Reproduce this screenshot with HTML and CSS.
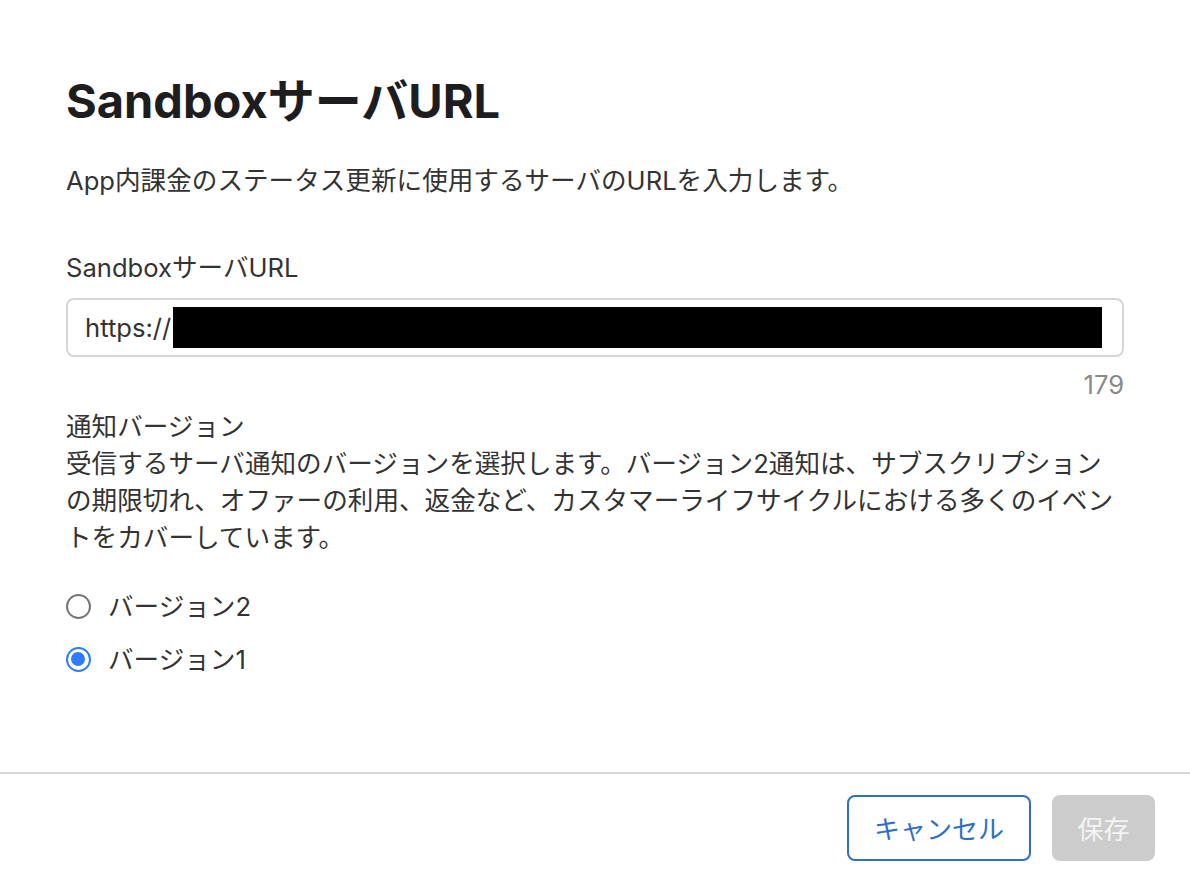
FILE: index.html
```html
<!DOCTYPE html>
<html lang="ja">
<head>
<meta charset="utf-8">
<title>SandboxサーバURL</title>
<link rel="stylesheet" href="styles.css">
</head>
<body>
<div class="dialog">
  <div class="content">
    <h1 class="title">SandboxサーバURL</h1>
    <p class="desc">App内課金のステータス更新に使用するサーバのURLを入力します。</p>

    <label class="field-label" for="url">SandboxサーバURL</label>
    <div class="input">
      <span class="input-text">https://</span><span class="redact"></span>
    </div>
    <div class="counter">179</div>

    <div class="section-label">通知バージョン</div>
    <p class="section-desc">受信するサーバ通知のバージョンを選択します。バージョン2通知は、サブスクリプションの期限切れ、オファーの利用、返金など、カスタマーライフサイクルにおける多くのイベントをカバーしています。</p>

    <div class="radios">
      <div class="radio-row">
        <span class="radio"></span>
        <span class="radio-label">バージョン2</span>
      </div>
      <div class="radio-row">
        <span class="radio checked"></span>
        <span class="radio-label">バージョン1</span>
      </div>
    </div>
  </div>
  <div class="footer">
    <button class="btn btn-cancel">キャンセル</button>
    <button class="btn btn-save">保存</button>
  </div>
</div>
</body>
</html>
```
FILE: styles.css
```css
* { box-sizing: border-box; }
html, body {
  margin: 0;
  padding: 0;
  background: #ffffff;
}
body {
  font-family: "Inter", "Noto Sans CJK JP", sans-serif;
  color: #333333;
  font-size: 25.6px;
}
.dialog {
  width: 1190px;
  height: 874px;
  display: flex;
  flex-direction: column;
}
.content {
  padding: 75px 66px 0 66px;
  height: 772px;
}
.title {
  margin: 0;
  font-size: 47px;
  line-height: 52px;
  font-weight: 700;
  color: #1d1d1f;
}
.desc {
  margin: 35px 0 0 0;
  line-height: 37px;
}
.field-label {
  display: block;
  margin-top: 50px;
  line-height: 37px;
}
.input {
  margin-top: 12px;
  height: 59px;
  border: 2px solid #d6d6d6;
  border-radius: 8px;
  display: flex;
  align-items: center;
  padding: 0 20px 0 17px;
}
.input-text {
  line-height: 37px;
}
.redact {
  flex: 1;
  height: 41px;
  background: #000000;
  margin-left: 2px;
}
.counter {
  margin-top: 9px;
  text-align: right;
  line-height: 37px;
  color: #8a8a8a;
}
.section-label {
  margin-top: 5px;
  line-height: 37px;
}
.section-desc {
  margin: 0;
  line-height: 37px;
}
.radios {
  margin-top: 24px;
  display: flex;
  flex-direction: column;
}
.radio-row {
  height: 53px;
  display: flex;
  align-items: center;
}
.radio {
  width: 25px;
  height: 25px;
  border-radius: 50%;
  border: 2px solid #767676;
  margin-right: 17px;
  flex: none;
  position: relative;
}
.radio.checked {
  border: 2.5px solid #2f7cf6;
}
.radio.checked::after {
  content: "";
  position: absolute;
  left: 3px;
  top: 3px;
  width: 14px;
  height: 14px;
  border-radius: 50%;
  background: #2f7cf6;
}
.radio-label {
  line-height: 37px;
}
.footer {
  border-top: 2px solid #d6d6d6;
  padding: 21px 35px 0 0;
  display: flex;
  justify-content: flex-end;
  gap: 21px;
}
.btn {
  height: 66px;
  padding: 0 24px 2px;
  font-family: "Inter", "Noto Sans CJK JP", sans-serif;
  font-size: 26px;
  border-radius: 8px;
  cursor: pointer;
}
.btn-cancel {
  width: 184px;
  background: #ffffff;
  color: #2d6fc6;
  border: 2px solid #2d6fc6;
}
.btn-save {
  width: 103px;
  background: #cccccc;
  color: #f4f4f4;
  border: none;
}
```
